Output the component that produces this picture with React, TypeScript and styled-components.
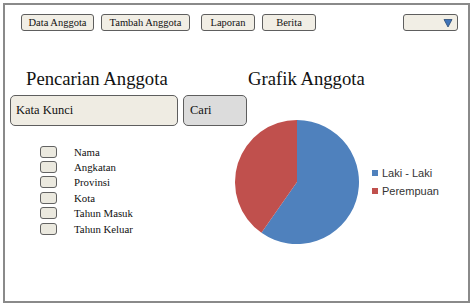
import React from "react";
import styled, { createGlobalStyle } from "styled-components";

const Global = createGlobalStyle`
  html, body { margin: 0; padding: 0; background: #ffffff; }
  * { box-sizing: border-box; }
`;

const Frame = styled.div`
  margin: 3px 0 0 3px;
  width: 467px;
  height: 300px;
  border: 2px solid #8a8a8a;
  background: #ffffff;
  font-family: "Liberation Serif", "Times New Roman", serif;
  color: #111;
`;

const Nav = styled.nav`
  display: flex;
  align-items: center;
  gap: 7px;
  padding: 9px 10px 0 16px;
`;

const NavButton = styled.button<{ $w: number; $after?: number }>`
  width: ${(p) => p.$w}px;
  margin-right: ${(p) => p.$after ?? 0}px;
  height: 17px;
  padding: 0;
  border: 1.5px solid #5e5e5e;
  border-radius: 3px;
  background: #f1eee5;
  font-family: "Liberation Serif", "Times New Roman", serif;
  font-size: 10.5px;
  line-height: 14px;
  color: #111;
`;

const Dropdown = styled.div`
  margin-left: auto;
  width: 55px;
  height: 17px;
  border: 1.5px solid #5e5e5e;
  border-radius: 3px;
  background: #f1eee5;
  display: flex;
  align-items: center;
  justify-content: flex-end;
  padding-right: 4px;
`;

const Main = styled.div`
  display: grid;
  grid-template-columns: 225px 13px 1fr;
  grid-template-rows: 21px 31px auto;
  row-gap: 6px;
  margin-top: 37px;
  padding-left: 5px;
`;

const Heading = styled.h2<{ $col: string; $indent: number }>`
  grid-column: ${(p) => p.$col};
  grid-row: 1;
  margin: 0 0 0 ${(p) => p.$indent}px;
  font-weight: normal;
  font-size: 18.7px;
  line-height: 21px;
  white-space: nowrap;
`;

const SearchRow = styled.div`
  grid-column: 1 / 3;
  grid-row: 2;
  display: flex;
  gap: 5px;
`;

const Field = styled.div<{ $w: number; $bg: string; $pad: number }>`
  width: ${(p) => p.$w}px;
  height: 31px;
  border: 1.5px solid #5e5e5e;
  border-radius: 5px;
  background: ${(p) => p.$bg};
  display: flex;
  align-items: center;
  padding-left: ${(p) => p.$pad}px;
  font-size: 12.5px;
`;

const List = styled.ul`
  grid-column: 1;
  grid-row: 3;
  list-style: none;
  margin: 0;
  padding: 12px 0 0 30px;
`;

const Item = styled.li`
  height: 15.4px;
  display: flex;
  align-items: center;
  gap: 17px;
  font-size: 10.8px;
`;

const Box = styled.span`
  width: 17px;
  height: 12px;
  border: 1.5px solid #626262;
  border-radius: 3px;
  background: #ebe9df;
  flex: none;
`;

const Chart = styled.div`
  grid-column: 2 / 4;
  grid-row: 2 / 4;
  display: flex;
  align-items: center;
  gap: 13px;
  padding-top: 25px;
  align-self: start;
`;

const Legend = styled.ul`
  list-style: none;
  margin: 0;
  padding: 0;
  font-family: "Liberation Sans", Arial, sans-serif;
  font-size: 11px;
  color: #333;
`;

const LegendItem = styled.li`
  height: 18.5px;
  display: flex;
  align-items: center;
  gap: 4px;
`;

const Swatch = styled.span<{ $c: string }>`
  width: 6px;
  height: 6px;
  background: ${(p) => p.$c};
`;

const BLUE = "#4f81bd";
const RED = "#c0504d";

const fields = ["Nama", "Angkatan", "Provinsi", "Kota", "Tahun Masuk", "Tahun Keluar"];

export default function App() {
  const r = 62;
  const angle = (215 * Math.PI) / 180;
  const ex = r + r * Math.sin(angle);
  const ey = r - r * Math.cos(angle);
  return (
    <>
      <Global />
      <Frame>
        <Nav>
          <NavButton $w={73}>Data Anggota</NavButton>
          <NavButton $w={89} $after={4}>Tambah Anggota</NavButton>
          <NavButton $w={54}>Laporan</NavButton>
          <NavButton $w={54}>Berita</NavButton>
          <Dropdown>
            <svg width="10" height="10" viewBox="0 0 10 10">
              <path d="M1 1.5 L9 1.5 L5 9 Z" fill="#3f73b8" stroke="#2b4a73" strokeWidth="0.8" strokeLinejoin="round" />
            </svg>
          </Dropdown>
        </Nav>
        <Main>
          <Heading $col="1" $indent={16}>Pencarian Anggota</Heading>
          <Heading $col="3" $indent={0}>Grafik Anggota</Heading>
          <SearchRow>
            <Field $w={168} $bg="#efece3" $pad={5}>Kata Kunci</Field>
            <Field $w={64} $bg="#dcdcdc" $pad={6}>Cari</Field>
          </SearchRow>
          <List>
            {fields.map((f) => (
              <Item key={f}>
                <Box />
                {f}
              </Item>
            ))}
          </List>
          <Chart>
            <svg width={2 * r} height={2 * r} viewBox={`0 0 ${2 * r} ${2 * r}`}>
              <path d={`M${r} ${r} L${r} 0 A${r} ${r} 0 1 1 ${ex} ${ey} Z`} fill={BLUE} />
              <path d={`M${r} ${r} L${ex} ${ey} A${r} ${r} 0 0 1 ${r} 0 Z`} fill={RED} />
            </svg>
            <Legend>
              <LegendItem>
                <Swatch $c={BLUE} />
                Laki - Laki
              </LegendItem>
              <LegendItem>
                <Swatch $c={RED} />
                Perempuan
              </LegendItem>
            </Legend>
          </Chart>
        </Main>
      </Frame>
    </>
  );
}
